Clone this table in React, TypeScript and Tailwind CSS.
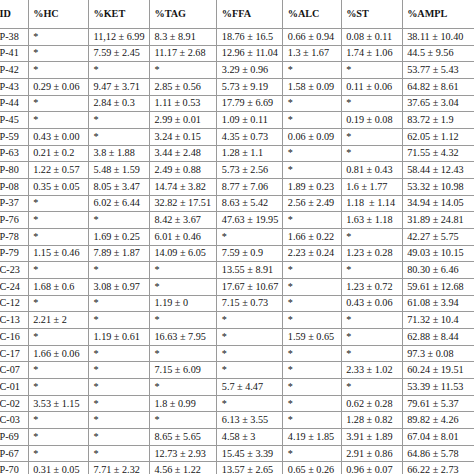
const columns = ["ID", "%HC", "%KET", "%TAG", "%FFA", "%ALC", "%ST", "%AMPL"]

// id, hc, ket, tag, ffa, alc, st, ampl
const rows: string[][] = [
  ["P-38", "*", "11,12 ± 6.99", "8.3 ± 8.91", "18.76 ± 16.5", "0.66 ± 0.94", "0.08 ± 0.11", "38.11 ± 10.40"],
  ["P-41", "*", "7.59 ± 2.45", "11.17 ± 2.68", "12.96 ± 11.04", "1.3 ± 1.67", "1.74 ± 1.06", "44.5 ± 9.56"],
  ["P-42", "*", "*", "*", "3.29 ± 0.96", "*", "*", "53.77 ± 5.43"],
  ["P-43", "0.29 ± 0.06", "9.47 ± 3.71", "2.85 ± 0.56", "5.73 ± 9.19", "1.58 ± 0.09", "0.11 ± 0.06", "64.82 ± 8.61"],
  ["P-44", "*", "2.84 ± 0.3", "1.11 ± 0.53", "17.79 ± 6.69", "*", "*", "37.65 ± 3.04"],
  ["P-45", "*", "*", "2.99 ± 0.01", "1.09 ± 0.11", "*", "0.19 ± 0.08", "83.72 ± 1.9"],
  ["P-59", "0.43 ± 0.00", "*", "3.24 ± 0.15", "4.35 ± 0.73", "0.06 ± 0.09", "*", "62.05 ± 1.12"],
  ["P-63", "0.21 ± 0.2", "3.8 ± 1.88", "3.44 ± 2.48", "1.28 ± 1.1", "*", "*", "71.55 ± 4.32"],
  ["P-80", "1.22 ± 0.57", "5.48 ± 1.59", "2.49 ± 0.88", "5.73 ± 2.56", "*", "0.81 ± 0.43", "58.44 ± 12.43"],
  ["P-08", "0.35 ± 0.05", "8.05 ± 3.47", "14.74 ± 3.82", "8.77 ± 7.06", "1.89 ± 0.23", "1.6 ± 1.77", "53.32 ± 10.98"],
  ["P-37", "*", "6.02 ± 6.44", "32.82 ± 17.51", "8.63 ± 5.42", "2.56 ± 2.49", "1.18  ± 1.14", "34.94 ± 14.05"],
  ["P-76", "*", "*", "8.42 ± 3.67", "47.63 ± 19.95", "*", "1.63 ± 1.18", "31.89 ± 24.81"],
  ["P-78", "*", "1.69 ± 0.25", "6.01 ± 0.46", "*", "1.66 ± 0.22", "*", "42.27 ± 5.75"],
  ["P-79", "1.15 ± 0.46", "7.89 ± 1.87", "14.09 ± 6.05", "7.59 ± 0.9", "2.23 ± 0.24", "1.23 ± 0.28", "49.03 ± 10.15"],
  ["C-23", "*", "*", "*", "13.55 ± 8.91", "*", "*", "80.30 ± 6.46"],
  ["C-24", "1.68 ± 0.6", "3.08 ± 0.97", "*", "17.67 ± 10.67", "*", "1.23 ± 0.72", "59.61 ± 12.68"],
  ["C-12", "*", "*", "1.19 ± 0", "7.15 ± 0.73", "*", "0.43 ± 0.06", "61.08 ± 3.94"],
  ["C-13", "2.21 ± 2", "*", "*", "*", "*", "*", "71.32 ± 10.4"],
  ["C-16", "*", "1.19 ± 0.61", "16.63 ± 7.95", "*", "1.59 ± 0.65", "*", "62.88 ± 8.44"],
  ["C-17", "1.66 ± 0.06", "*", "*", "*", "*", "*", "97.3 ± 0.08"],
  ["C-07", "*", "*", "7.15 ± 6.09", "*", "*", "2.33 ± 1.02", "60.24 ± 19.51"],
  ["C-01", "*", "*", "*", "5.7 ± 4.47", "*", "*", "53.39 ± 11.53"],
  ["C-02", "3.53 ± 1.15", "*", "1.8 ± 0.99", "*", "*", "0.62 ± 0.28", "79.61 ± 5.37"],
  ["C-03", "*", "*", "*", "6.13 ± 3.55", "*", "1.28 ± 0.82", "89.82 ± 4.26"],
  ["P-69", "*", "*", "8.65 ± 5.65", "4.58 ± 3", "4.19 ± 1.85", "3.91 ± 1.89", "67.04 ± 8.01"],
  ["P-67", "*", "*", "12.73 ± 2.93", "15.45 ± 3.39", "*", "2.91 ± 0.86", "64.86 ± 5.78"],
  ["P-70", "0.31 ± 0.05", "7.71 ± 2.32", "4.56 ± 1.22", "13.57 ± 2.65", "0.65 ± 0.26", "0.96 ± 0.07", "66.22 ± 2.73"],
]

const grid = "grid grid-cols-[33.7px_60.3px_61px_67.3px_66px_58.4px_61px_90px]"

export default function App() {
  return (
    <div className="w-[474px] h-[474px] overflow-hidden bg-white">
      <div
        className="ml-[-5px] w-[500px] text-[10.2px] text-[#141414] leading-none"
        style={{ fontFamily: '"Liberation Serif", "Times New Roman", serif' }}
      >
        {/* Header */}
        <div className={`${grid} h-[29px] border-b border-[#9a9a9a]`}>
          {columns.map((col) => (
            <div
              key={col}
              className="flex items-center pl-[4.5px] border-r border-[#9a9a9a] font-bold whitespace-pre"
            >
              {col}
            </div>
          ))}
        </div>

        {/* Body */}
        {rows.map((row) => (
          <div key={row[0]} className={`${grid} h-[16.68px] border-b border-[#9a9a9a]`}>
            {row.map((cell, i) => (
              <div
                key={i}
                className="flex items-center pl-[4.5px] border-r border-[#9a9a9a] whitespace-pre overflow-hidden"
              >
                {cell}
              </div>
            ))}
          </div>
        ))}
      </div>
    </div>
  )
}
